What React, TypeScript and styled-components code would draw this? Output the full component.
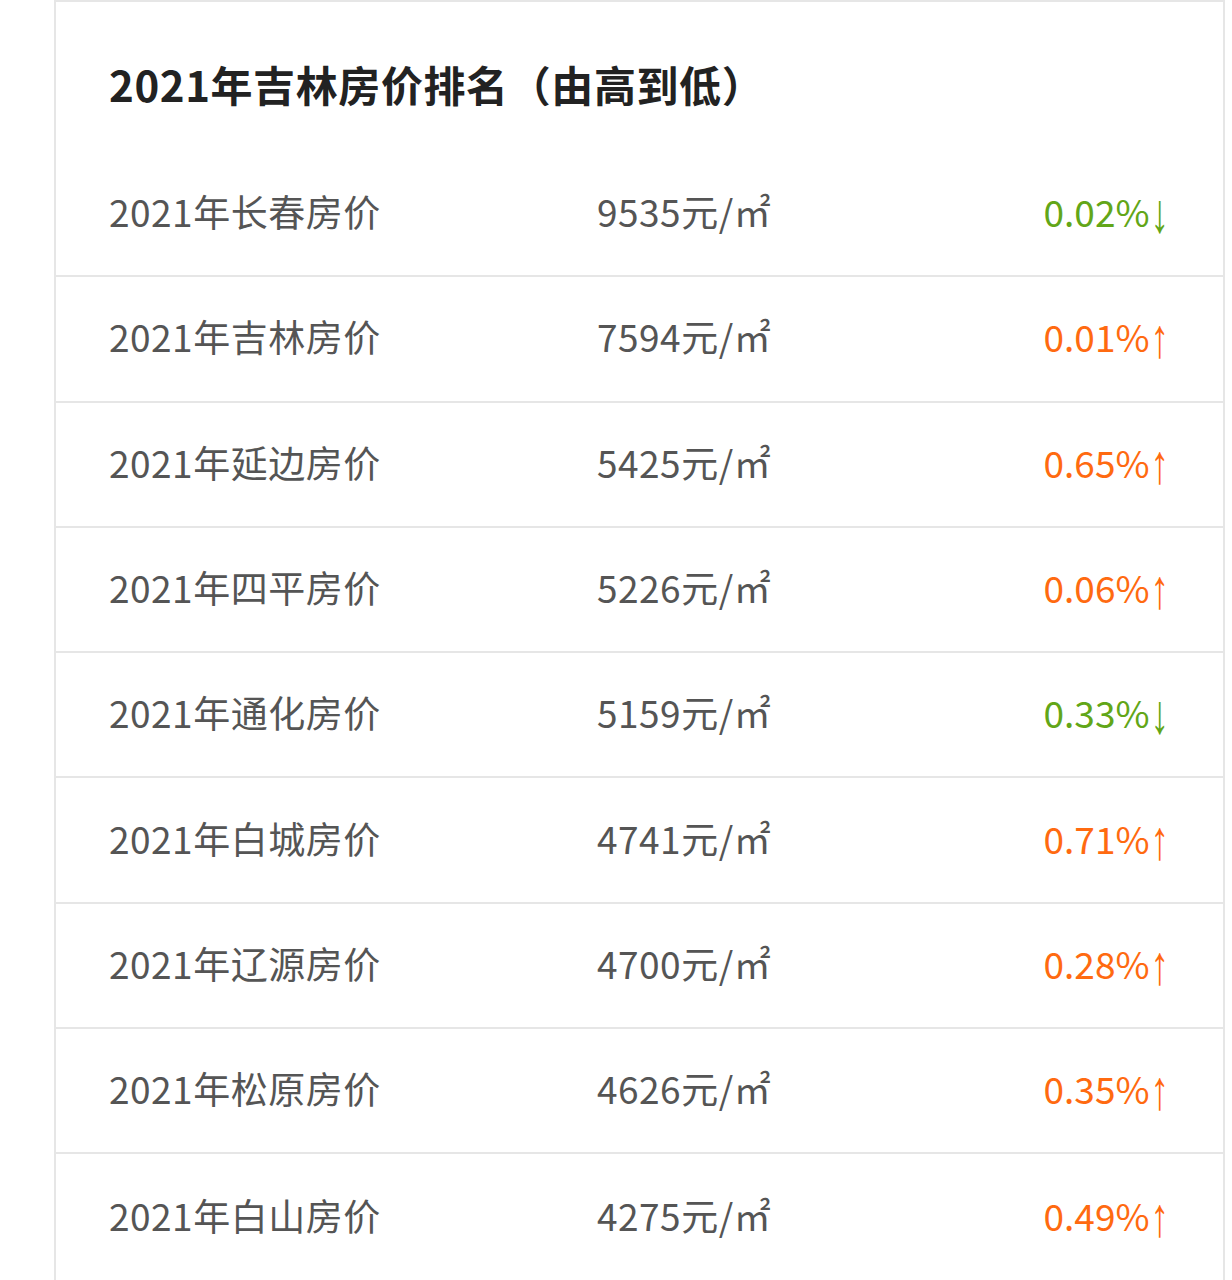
import React from "react";
import styled, { createGlobalStyle } from "styled-components";

const GlobalStyle = createGlobalStyle`
  html, body {
    margin: 0;
    padding: 0;
    background: #ffffff;
  }
  body {
    font-family: "Noto Sans CJK SC", "Noto Sans", sans-serif;
  }
`;

type PriceRow = {
  city: string;
  price: number;
  change: string;
  up: boolean;
};

const rows: PriceRow[] = [
  { city: "长春", price: 9535, change: "0.02", up: false },
  { city: "吉林", price: 7594, change: "0.01", up: true },
  { city: "延边", price: 5425, change: "0.65", up: true },
  { city: "四平", price: 5226, change: "0.06", up: true },
  { city: "通化", price: 5159, change: "0.33", up: false },
  { city: "白城", price: 4741, change: "0.71", up: true },
  { city: "辽源", price: 4700, change: "0.28", up: true },
  { city: "松原", price: 4626, change: "0.35", up: true },
  { city: "白山", price: 4275, change: "0.49", up: true },
];

function App() {
  return (
    <>
      <GlobalStyle />
      <Card>
        <Title>2021年吉林房价排名（由高到低）</Title>
        {rows.map((row) => (
          <Row key={row.city}>
            <CityName>{`2021年${row.city}房价`}</CityName>
            <Price>{`${row.price}元/㎡`}</Price>
            <Change $up={row.up}>
              {`${row.change}%`}
              <Arrow>{row.up ? "↑" : "↓"}</Arrow>
            </Change>
          </Row>
        ))}
      </Card>
    </>
  );
}

const Card = styled.section`
  box-sizing: border-box;
  width: 1171px;
  margin-left: 54px;
  border: 2px solid #e6e6e6;
  border-bottom: none;
  background: #fff;
`;

const Title = styled.h2`
  margin: 0;
  padding: 52px 0 38px 53px;
  line-height: 60px;
  font-size: 42px;
  font-weight: 700;
  letter-spacing: 0.6px;
  color: #222222;
`;

const Row = styled.div`
  box-sizing: border-box;
  display: grid;
  grid-template-columns: 488px 1fr auto;
  align-items: center;
  height: 125.3px;
  padding: 0 54px 5px 53px;
  border-bottom: 2px solid #e6e6e6;
  font-size: 37px;
  letter-spacing: 0.5px;
  color: #555555;

  &:last-child {
    border-bottom: none;
  }
`;

const CityName = styled.span`
  white-space: nowrap;
`;

const Price = styled.span`
  white-space: nowrap;
`;

const Change = styled.span<{ $up: boolean }>`
  white-space: nowrap;
  letter-spacing: 0;
  color: ${(p) => (p.$up ? "#ff6a10" : "#62a618")};
`;

const Arrow = styled.span`
  display: inline-block;
  margin-left: 1px;
  font-family: "Liberation Sans", "DejaVu Sans", sans-serif;
  transform: scaleY(1.5) translateY(-1px);
`;

export default App;
